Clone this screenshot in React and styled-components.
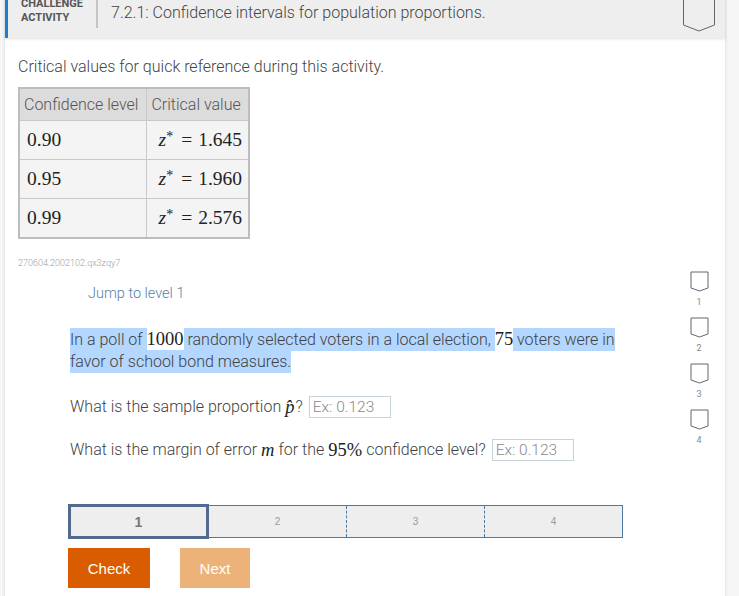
import React from 'react'
import styled, { createGlobalStyle } from 'styled-components'

const GlobalStyle = createGlobalStyle`
  html, body {
    margin: 0;
    padding: 0;
    background: #f6f6f6;
    font-family: Roboto, "Liberation Sans", Arial, sans-serif;
    font-weight: 300;
    overflow: hidden;
  }
`

const Card = styled.div`
  margin: -10px 0 0 5px;
  width: 720px;
  min-height: 620px;
  background: #fff;
  box-shadow: 0 0 3px rgba(0, 0, 0, 0.15);
`

const Header = styled.div`
  display: flex;
  align-items: flex-start;
  height: 48px;
  box-sizing: border-box;
  padding: 0 9px 0 13px;
  background: #eeeeee;
  border-left: 3px solid #1a7fd0;
  box-shadow: 0 1px 3px rgba(0, 0, 0, 0.12);
  position: relative;
`

const Label = styled.div`
  margin-top: 7px;
  padding: 0 13px 3px 0;
  border-right: 2px solid #c4c4c4;
  font-size: 11px;
  line-height: 14px;
  font-weight: 700;
  color: #555;
  text-transform: uppercase;
`

const Title = styled.div`
  margin: 13px 0 0 13px;
  font-size: 16px;
  line-height: 20px;
  font-weight: 300;
  color: #444;
`

const Badge = styled.svg`
  margin-left: auto;
  display: block;
`

const Content = styled.div`
  padding: 19px 16px 0 13px;
`

const Intro = styled.div`
  font-size: 16px;
  line-height: 20px;
  color: #444;
`

const Table = styled.table`
  margin-top: 10px;
  border-collapse: collapse;
  border: 2px solid #bdbdbd;
  width: 232px;
  th, td {
    border: 1px solid #c8c8c8;
    text-align: left;
  }
  th {
    height: 31px;
    padding: 0 4px;
    background: #dcdcdc;
    font-weight: 300;
    font-size: 16px;
    color: #555;
  }
  td {
    height: 38px;
    padding: 0 7px;
    background: #f4f4f4;
    font-family: "Liberation Serif", "Times New Roman", serif;
    font-weight: 400;
    font-size: 19.5px;
    color: #222;
  }
  td + td {
    padding: 0 6px;
    text-align: right;
  }
`

const Italic = styled.i`
  font-family: "Liberation Serif", "Times New Roman", serif;
  font-style: italic;
`

const Sup = styled.sup`
  font-size: 14px;
  line-height: 0;
  vertical-align: 5px;
`

const Eq = styled.span`
  margin: 0 6px 0 8px;
`

const ActivityId = styled.div`
  margin-top: 18px;
  font-size: 9px;
  line-height: 12px;
  color: #a0a0a0;
`

const ActivityRow = styled.div`
  display: flex;
`

const Main = styled.div`
  flex: 1;
`

const Jump = styled.div`
  margin: 16px 0 0 70px;
  font-size: 14.5px;
  line-height: 18px;
  color: #5a80a8;
`

const Problem = styled.div`
  margin: 25px 0 0 52px;
  max-width: 562px;
  font-size: 16px;
  line-height: 22px;
  color: #3f3f3f;
`

const Mark = styled.span`
  background: ${p => (p.$plain ? '#fff' : '#b3d7fe')};
  padding: 2px 0;
  font-family: ${p => (p.$plain ? '"Liberation Serif", "Times New Roman", serif' : 'inherit')};
  font-weight: ${p => (p.$plain ? 400 : 'inherit')};
  font-size: ${p => (p.$plain ? '18.5px' : 'inherit')};
  color: ${p => (p.$plain ? '#222' : 'inherit')};
`

const Question = styled.div`
  display: flex;
  align-items: center;
  margin: ${p => p.$first ? '23px' : '21px'} 0 0 52px;
  font-size: 16px;
  line-height: 22px;
  color: #3f3f3f;
`

const MathVar = styled.span`
  font-family: "Liberation Serif", "Times New Roman", serif;
  font-style: ${p => (p.$upright ? 'normal' : 'italic')};
  font-weight: 400;
  font-size: 18.5px;
  color: #222;
  margin: ${p => (p.$tight ? '0 1px 0 4px' : '0 4px')};
`

const Answer = styled.div`
  margin-left: 6px;
  width: 82px;
  height: 22px;
  box-sizing: border-box;
  border: 1px solid #c6d4d9;
  padding: 0 3px;
  font-size: 15.5px;
  line-height: 20px;
  color: #8a8a8a;
`

const Progress = styled.div`
  display: flex;
  margin: 44px 0 0 50px;
  width: 555px;
  height: 33px;
  box-sizing: border-box;
  border: 1px solid #4d7aa5;
  background: #eeeeee;
`

const Step = styled.div`
  flex: 1;
  display: flex;
  align-items: center;
  justify-content: center;
  font-family: "Liberation Sans", Arial, sans-serif;
  font-size: ${p => (p.$active ? '14px' : '10px')};
  font-weight: ${p => (p.$active ? 700 : 400)};
  color: ${p => (p.$active ? '#777' : '#9a9a9a')};
  box-sizing: border-box;
  ${p => p.$active && `
    margin: -2px 0 -2px -1px;
    border: 3px solid #536a8e;
    flex: 0 0 141px;
  `}
  ${p => p.$dashed && `border-left: 1px dashed #4d7aa5;`}
`

const Buttons = styled.div`
  display: flex;
  gap: 30px;
  margin: 10px 0 0 50px;
`

const Button = styled.button`
  height: 40px;
  width: ${p => p.$w}px;
  border: none;
  padding: 0;
  background: ${p => (p.$disabled ? '#edb27a' : '#d95c00')};
  color: #fff;
  font-family: "Liberation Sans", Arial, sans-serif;
  font-size: 15px;
`

const Levels = styled.div`
  display: flex;
  flex-direction: column;
  align-items: center;
  gap: 10px;
  margin-top: 2px;
  width: 20px;
`

const Level = styled.div`
  display: flex;
  flex-direction: column;
  align-items: center;
  gap: 5px;
  font-size: 9px;
  line-height: 10px;
  font-weight: 400;
  color: #888;
`

const Shield = () => (
  <svg width="19" height="21" viewBox="0 0 19 21">
    <path d="M1 1 H18 V17 L9.5 20 L1 17 Z" fill="none" stroke="#666" strokeWidth="1" />
  </svg>
)

const rows = [
  ['0.90', '1.645'],
  ['0.95', '1.960'],
  ['0.99', '2.576'],
]

const App = () => {
  return (
    <>
      <GlobalStyle />
      <Card>
        <Header>
          <Label>Challenge<br />Activity</Label>
          <Title>7.2.1: Confidence intervals for population proportions.</Title>
          <Badge width="34" height="42" viewBox="0 0 34 42">
            <path d="M1.5 0 V35 L17 41 L32.5 35 V0" fill="none" stroke="#666" strokeWidth="1" />
          </Badge>
        </Header>
        <Content>
          <Intro>Critical values for quick reference during this activity.</Intro>
          <Table>
            <thead>
              <tr>
                <th>Confidence level</th>
                <th>Critical value</th>
              </tr>
            </thead>
            <tbody>
              {rows.map(([level, value]) => (
                <tr key={level}>
                  <td>{level}</td>
                  <td>
                    <Italic>z</Italic><Sup>*</Sup><Eq>=</Eq>{value}
                  </td>
                </tr>
              ))}
            </tbody>
          </Table>
          <ActivityId>270604.2002102.qx3zqy7</ActivityId>
          <ActivityRow>
            <Main>
              <Jump>Jump to level 1</Jump>
              <Problem>
                <Mark>In a poll of </Mark>
                <Mark $plain>1000</Mark>
                <Mark> randomly selected voters in a local election, </Mark>
                <Mark $plain>75</Mark>
                <Mark> voters were in favor of school bond measures.</Mark>
              </Problem>
              <Question $first>
                What is the sample proportion<MathVar $tight>p̂</MathVar>?
                <Answer>Ex: 0.123</Answer>
              </Question>
              <Question>
                What is the margin of error<MathVar>m</MathVar>for the<MathVar $upright>95%</MathVar>confidence level?
                <Answer>Ex: 0.123</Answer>
              </Question>
              <Progress>
                <Step $active>1</Step>
                <Step>2</Step>
                <Step $dashed>3</Step>
                <Step $dashed>4</Step>
              </Progress>
              <Buttons>
                <Button $w={82}>Check</Button>
                <Button $w={70} $disabled>Next</Button>
              </Buttons>
            </Main>
            <Levels>
              {[1, 2, 3, 4].map(n => (
                <Level key={n}>
                  <Shield />
                  {n}
                </Level>
              ))}
            </Levels>
          </ActivityRow>
        </Content>
      </Card>
    </>
  )
}

export default App
